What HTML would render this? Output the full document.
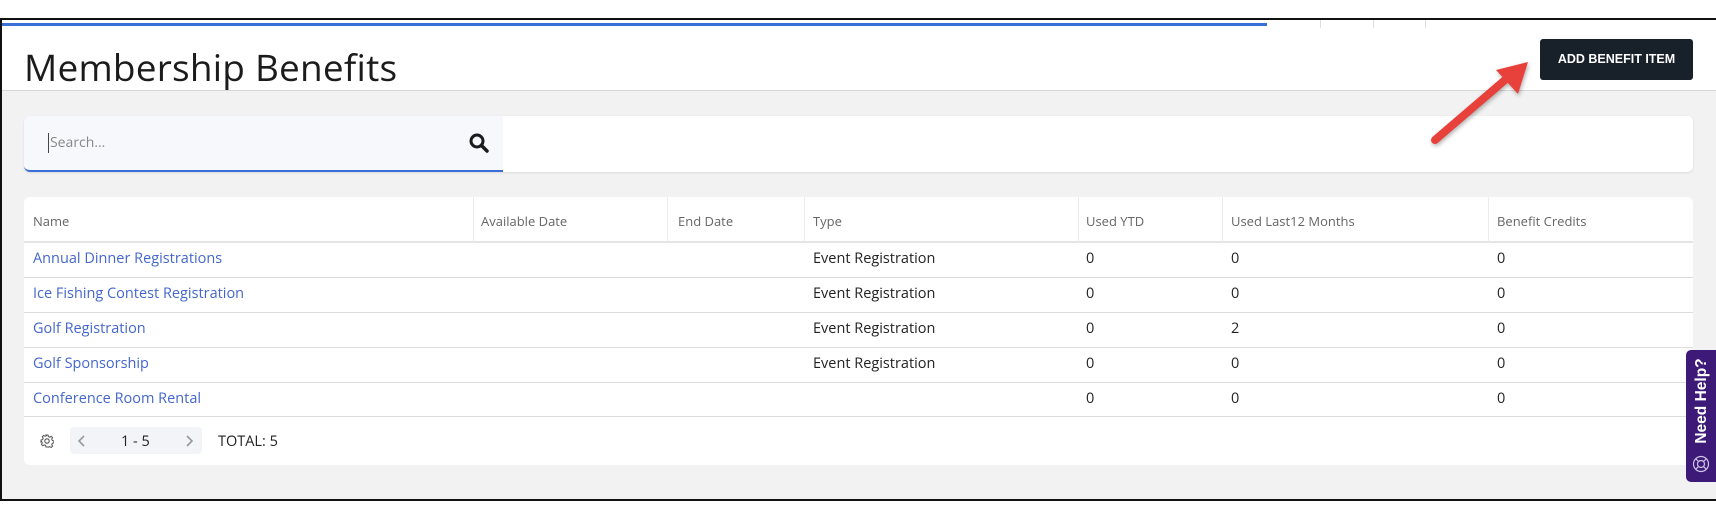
<!DOCTYPE html>
<html><head><meta charset="utf-8"><style>
*{margin:0;padding:0;box-sizing:border-box}
body{width:1716px;height:521px;background:#fff;position:relative;overflow:hidden;font-family:"Open Sans","Liberation Sans",sans-serif}
.abs{position:absolute}
#frame{left:0;top:18px;width:1716px;height:483px;border-top:2px solid #111;border-bottom:2px solid #111;border-left:2px solid #111;background:#f2f2f2}
#hdr{left:2px;top:20px;width:1714px;height:71px;background:#fff;border-bottom:1px solid #d8d8d8}
#title{left:24px;top:41px;font-size:37px;color:#1b1b1b;font-weight:400;letter-spacing:0.2px}
#btn{left:1540px;top:39px;width:153px;height:41px;background:#18202a;border-radius:3px;color:#fff;font-weight:bold;font-size:12.5px;text-align:center;line-height:41px;font-family:"Liberation Sans",sans-serif}
#search{left:24px;top:116px;width:1669px;height:56px;background:#fff;border-radius:6px;box-shadow:0 1px 2px rgba(0,0,0,.1)}
#sbox{left:24px;top:116px;width:479px;height:56px;background:#f6f8fc;border-radius:6px 0 0 6px;border-bottom:2px solid #3a6fd8}
#card{left:24px;top:197px;width:1669px;height:268px;background:#fff;border-radius:6px}
.th{position:absolute;top:212px;font-size:13px;color:#666}
.cl{position:absolute;top:197px;width:1px;height:45px;background:#ececec}
.rl{position:absolute;left:24px;width:1669px;height:1px;background:#ddd}
.td{position:absolute;font-size:14.5px;color:#222}
.lk{color:#4466cc}
</style></head><body>
<div id="frame" class="abs"></div>
<div id="hdr" class="abs"></div>
<div class="abs" style="left:2px;top:23px;width:1265px;height:3px;background:#3a6fd8"></div>
<div class="abs" style="left:1320px;top:20px;width:1px;height:8px;background:#ddd"></div>
<div class="abs" style="left:1373px;top:20px;width:1px;height:8px;background:#ddd"></div>
<div class="abs" style="left:1425px;top:20px;width:1px;height:8px;background:#ddd"></div>
<div id="title" class="abs">Membership Benefits</div>
<div id="btn" class="abs">ADD BENEFIT ITEM</div>
<div id="search" class="abs"></div>
<div id="sbox" class="abs"></div>
<div class="abs" style="left:48px;top:133px;width:1px;height:20px;background:#444"></div>
<div class="abs" style="left:50px;top:133px;font-size:14px;color:#888">Search...</div>
<svg class="abs" style="left:468px;top:132px" width="22" height="22"><circle cx="9" cy="9" r="6" fill="none" stroke="#1b1b1b" stroke-width="3"/><line x1="13.5" y1="13.5" x2="19" y2="19" stroke="#1b1b1b" stroke-width="3.5" stroke-linecap="round"/></svg>
<div id="card" class="abs"></div>
<div class="abs" style="left:24px;top:241px;width:1669px;height:2px;background:#e4e4e4"></div>
<div class="cl" style="left:473px"></div><div class="cl" style="left:667px"></div><div class="cl" style="left:804px"></div><div class="cl" style="left:1078px"></div><div class="cl" style="left:1222px"></div><div class="cl" style="left:1488px"></div>
<div class="th" style="left:33px">Name</div><div class="th" style="left:481px">Available Date</div><div class="th" style="left:678px">End Date</div><div class="th" style="left:813px">Type</div><div class="th" style="left:1086px">Used YTD</div><div class="th" style="left:1231px">Used Last12 Months</div><div class="th" style="left:1497px">Benefit Credits</div>
<div class="rl" style="top:277px"></div><div class="rl" style="top:312px"></div><div class="rl" style="top:347px"></div><div class="rl" style="top:382px"></div><div class="rl" style="top:416px"></div>
<div class="td lk" style="left:33px;top:249px">Annual Dinner Registrations</div>
<div class="td lk" style="left:33px;top:284px">Ice Fishing Contest Registration</div>
<div class="td lk" style="left:33px;top:319px">Golf Registration</div>
<div class="td lk" style="left:33px;top:354px">Golf Sponsorship</div>
<div class="td lk" style="left:33px;top:389px">Conference Room Rental</div>
<div class="td" style="left:813px;top:249px">Event Registration</div>
<div class="td" style="left:813px;top:284px">Event Registration</div>
<div class="td" style="left:813px;top:319px">Event Registration</div>
<div class="td" style="left:813px;top:354px">Event Registration</div>
<div class="td" style="left:1086px;top:249px">0</div><div class="td" style="left:1231px;top:249px">0</div><div class="td" style="left:1497px;top:249px">0</div>
<div class="td" style="left:1086px;top:284px">0</div><div class="td" style="left:1231px;top:284px">0</div><div class="td" style="left:1497px;top:284px">0</div>
<div class="td" style="left:1086px;top:319px">0</div><div class="td" style="left:1231px;top:319px">2</div><div class="td" style="left:1497px;top:319px">0</div>
<div class="td" style="left:1086px;top:354px">0</div><div class="td" style="left:1231px;top:354px">0</div><div class="td" style="left:1497px;top:354px">0</div>
<div class="td" style="left:1086px;top:389px">0</div><div class="td" style="left:1231px;top:389px">0</div><div class="td" style="left:1497px;top:389px">0</div>
<svg class="abs" style="left:40px;top:434px" width="14" height="14" viewBox="0 0 14 14"><circle cx="7" cy="7" r="2.2" fill="none" stroke="#555" stroke-width="1.1"/><path d="M6 1h2l.4 1.6 1.4.6 1.4-.9 1.4 1.4-.9 1.4.6 1.4 1.6.4v2l-1.6.4-.6 1.4.9 1.4-1.4 1.4-1.4-.9-1.4.6L8 13H6l-.4-1.6-1.4-.6-1.4.9-1.4-1.4.9-1.4-.6-1.4L1 8V6l1.6-.4.6-1.4-.9-1.4 1.4-1.4 1.4.9 1.4-.6z" fill="none" stroke="#555" stroke-width="1"/></svg>
<div class="abs" style="left:70px;top:427px;width:132px;height:27px;background:#f2f4f8;border-radius:4px"></div>
<svg class="abs" style="left:76px;top:434px" width="12" height="14"><polyline points="8,2 3,7 8,12" fill="none" stroke="#999" stroke-width="1.6"/></svg>
<svg class="abs" style="left:184px;top:434px" width="12" height="14"><polyline points="3,2 8,7 3,12" fill="none" stroke="#999" stroke-width="1.6"/></svg>
<div class="abs" style="left:121px;top:432px;font-size:14.5px;color:#222">1 - 5</div>
<div class="abs" style="left:218px;top:432px;font-size:14.5px;color:#222">TOTAL: 5</div>
<div class="abs" style="left:1686px;top:350px;width:32px;height:132px;background:#3e1a78;border-radius:5px 0 0 5px"></div>
<div class="abs" style="left:1652px;top:392px;width:100px;height:18px;transform:rotate(-90deg);color:#fff;font-weight:bold;font-size:15.5px;font-family:'Liberation Sans',sans-serif;text-align:center;line-height:18px">Need Help?</div>
<svg class="abs" style="left:1692px;top:455px" width="18" height="18"><circle cx="9" cy="9" r="7.5" fill="none" stroke="#cfc4e6" stroke-width="1.2"/><circle cx="9" cy="9" r="3.5" fill="none" stroke="#cfc4e6" stroke-width="1.2"/><path d="M3.7 3.7l2.8 2.8M14.3 3.7l-2.8 2.8M3.7 14.3l2.8-2.8M14.3 14.3l-2.8-2.8" stroke="#cfc4e6" stroke-width="1.2"/></svg>
<svg class="abs" style="left:1420px;top:50px;filter:drop-shadow(1px 2px 2px rgba(0,0,0,.3))" width="120" height="110"><line x1="15" y1="90" x2="92" y2="24" stroke="#e8403a" stroke-width="8" stroke-linecap="round"/><polygon points="108,12 76,20 98,44" fill="#e8403a"/></svg>
</body></html>
